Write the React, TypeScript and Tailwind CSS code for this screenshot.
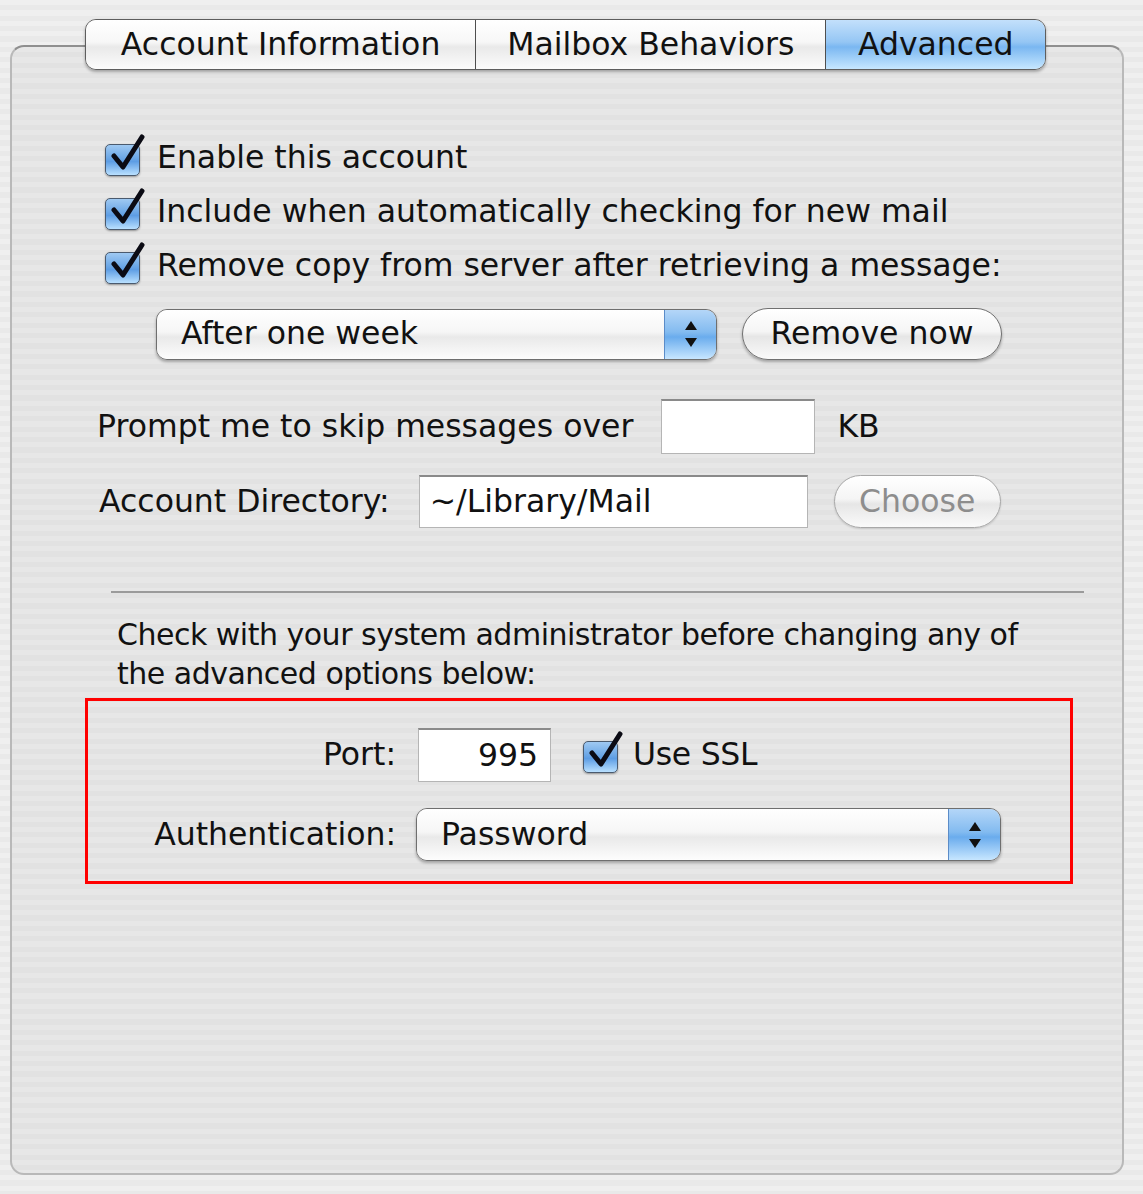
import React from "react";

const font = "font-['DejaVu_Sans','Liberation_Sans',sans-serif]";

function CheckBox() {
  return (
    <div className="relative w-[36px] h-[36px] shrink-0">
      <div className="absolute left-0 top-[4px] w-[35px] h-[32px] rounded-[5px] border-[1.5px] border-[#4a5a6e] bg-[linear-gradient(to_bottom,#9fc9f2_0%,#6aa6e6_45%,#5d9de4_55%,#b9e0ff_100%)] shadow-[0_1px_2px_rgba(0,0,0,0.35)]" />
      <svg className="absolute left-[4px] -top-[6px]" width="40" height="40" viewBox="0 0 40 40">
        <path
          d="M5 22 L14 33 L33 3"
          fill="none"
          stroke="#0b0b14"
          strokeWidth="5"
          strokeLinecap="round"
          strokeLinejoin="round"
        />
      </svg>
    </div>
  );
}

function CheckRow({ label }: { label: string }) {
  return (
    <div className="flex items-center h-[54px] gap-[16px]">
      <CheckBox />
      <span>{label}</span>
    </div>
  );
}

function Stepper() {
  return (
    <div className="w-[52px] shrink-0 flex items-center justify-center border-l border-[#5b8cc8] bg-[linear-gradient(to_bottom,#b4d6f8_0%,#83bbf0_45%,#6aaced_55%,#c7e6ff_100%)]">
      <svg width="14" height="32" viewBox="0 0 14 32">
        <polygon points="7,3 13,12 1,12" fill="#111" />
        <polygon points="1,20 13,20 7,29" fill="#111" />
      </svg>
    </div>
  );
}

function Popup({ label, className }: { label: string; className: string }) {
  return (
    <div
      className={`flex rounded-[11px] border-[1.5px] border-[#6f6f6f] overflow-hidden shadow-[0_2px_3px_rgba(0,0,0,0.3)] ${className}`}
    >
      <div className="flex-1 flex items-center pl-[24px] bg-[linear-gradient(to_bottom,#ffffff_0%,#f6f6f6_45%,#e9e9e9_55%,#fdfdfd_100%)]">
        {label}
      </div>
      <Stepper />
    </div>
  );
}

function PillButton({
  label,
  disabled,
  className,
}: {
  label: string;
  disabled?: boolean;
  className: string;
}) {
  return (
    <div
      className={`flex items-center justify-center rounded-full border-[1.5px] bg-[linear-gradient(to_bottom,#ffffff_0%,#f5f5f5_45%,#e6e6e6_55%,#fafafa_100%)] ${
        disabled
          ? "border-[#a8a8a8] text-[#8d8d8d] shadow-[0_1px_2px_rgba(0,0,0,0.15)]"
          : "border-[#707070] text-[#111] shadow-[0_2px_3px_rgba(0,0,0,0.3)]"
      } ${className}`}
    >
      {label}
    </div>
  );
}

function TextField({
  value,
  className,
}: {
  value?: string;
  className: string;
}) {
  return (
    <div
      className={`flex items-center bg-white border border-[#b5b5b5] border-t-[2px] border-t-[#8a8a8a] ${className}`}
    >
      {value}
    </div>
  );
}

const tabs = [
  { label: "Account Information", w: "w-[390px]", active: false },
  { label: "Mailbox Behaviors", w: "w-[351px]", active: false },
  { label: "Advanced", w: "w-[220px]", active: true },
];

export default function App() {
  return (
    <div
      className={`${font} text-[31.5px] leading-none text-[#111] w-[1143px] h-[1194px] overflow-hidden pt-[19px] pl-[10px] bg-[repeating-linear-gradient(to_bottom,#efefef_0px,#efefef_5.2px,#e9e9e9_5.2px,#e9e9e9_10.4px)]`}
    >
      {/* tab strip */}
      <div className="relative z-10 ml-[75px] flex w-[961px] h-[51px] rounded-[11px] border-[1.5px] border-[#5e5e5e] overflow-hidden shadow-[0_2px_3px_rgba(0,0,0,0.3)]">
        {tabs.map((t, i) => (
          <div
            key={t.label}
            className={`${t.w} flex items-center justify-center ${
              i > 0 ? "border-l border-[#4f4f4f]" : ""
            } ${
              t.active
                ? "bg-[linear-gradient(to_bottom,#c3e0fb_0%,#95c6f4_45%,#7ab7f1_55%,#c6e7ff_100%)]"
                : "bg-[linear-gradient(to_bottom,#ffffff_0%,#f7f7f7_45%,#e9e9e9_55%,#fcfcfc_100%)]"
            }`}
          >
            {t.label}
          </div>
        ))}
      </div>

      {/* panel */}
      <div className="-mt-[25px] w-[1114px] h-[1130px] rounded-[14px] border-2 border-[#b9b9b9] border-t-[#8f8f8f] bg-[repeating-linear-gradient(to_bottom,#e7e7e7_0px,#e7e7e7_5.2px,#e2e2e2_5.2px,#e2e2e2_10.4px)] pt-[84px]">
        <div className="ml-[93px] flex flex-col">
          <CheckRow label="Enable this account" />
          <CheckRow label="Include when automatically checking for new mail" />
          <CheckRow label="Remove copy from server after retrieving a message:" />
        </div>

        <div className="ml-[144px] mt-[15px] flex items-center gap-[25px]">
          <Popup label="After one week" className="w-[561px] h-[51px]" />
          <PillButton label="Remove now" className="w-[260px] h-[52px]" />
        </div>

        <div className="ml-[85px] mt-[39px] flex items-center h-[55px]">
          <span>Prompt me to skip messages over</span>
          <TextField className="ml-[28px] w-[154px] h-[55px]" />
          <span className="ml-[22px]">KB</span>
        </div>

        <div className="ml-[87px] mt-[21px] flex items-center h-[53px]">
          <span>Account Directory:</span>
          <TextField
            value="~/Library/Mail"
            className="ml-[29px] w-[389px] h-[53px] pl-[10px]"
          />
          <PillButton
            label="Choose"
            disabled
            className="ml-[26px] w-[167px] h-[53px]"
          />
        </div>

        <div className="ml-[99px] mt-[63px] w-[973px] h-[2px] bg-[#9b9b9b]" />

        <div className="ml-[105px] mt-[22px] text-[30px] tracking-[-0.5px] leading-[39px]">
          <p>Check with your system administrator before changing any of</p>
          <p>the advanced options below:</p>
        </div>

        <div className="ml-[73px] mt-[5px] w-[988px] h-[186px] border-[3px] border-[#ff0000] pt-[27px]">
          <div className="flex items-center h-[54px]">
            <span className="w-[308px] text-right">Port:</span>
            <TextField
              value="995"
              className="ml-[22px] w-[133px] h-[54px] justify-end pr-[12px]"
            />
            <div className="ml-[32px] flex items-center gap-[14px]">
              <CheckBox />
              <span className="tracking-[-0.3px]">Use SSL</span>
            </div>
          </div>
          <div className="mt-[26px] flex items-center h-[53px]">
            <span className="w-[308px] text-right">Authentication:</span>
            <Popup label="Password" className="ml-[20px] w-[585px] h-[53px]" />
          </div>
        </div>
      </div>
    </div>
  );
}
